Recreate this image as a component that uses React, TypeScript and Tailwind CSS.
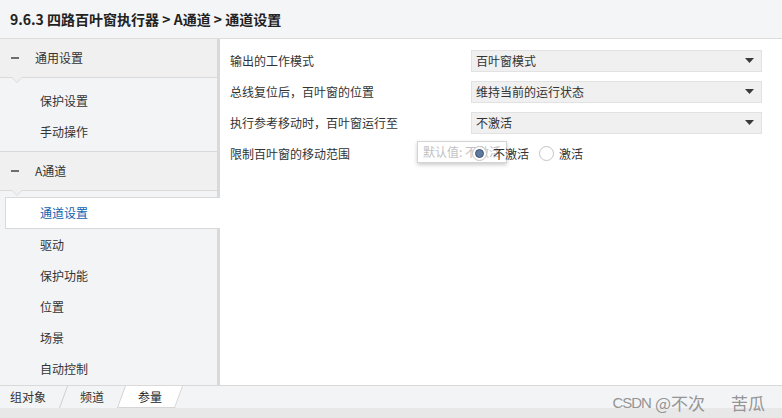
import React from "react";

const font = "font-['Microsoft_YaHei','Noto_Sans_CJK_SC',sans-serif]";

const groups = [
  { title: "通用设置", items: ["保护设置", "手动操作"] },
  { title: "A通道", items: ["通道设置", "驱动", "保护功能", "位置", "场景", "自动控制"] },
];

const selects = [
  { label: "输出的工作模式", value: "百叶窗模式" },
  { label: "总线复位后，百叶窗的位置", value: "维持当前的运行状态" },
  { label: "执行参考移动时，百叶窗运行至", value: "不激活" },
];

const Caret = () => (
  <svg width="9" height="5" viewBox="0 0 9 5">
    <path d="M0 0h9L4.5 5z" fill="#3a3a3a" />
  </svg>
);

const GroupHeader = ({ title, first }: { title: string; first?: boolean }) => (
  <div
    className={`relative flex items-center h-[39px] bg-[#f0f0f0] border-b border-[#dadada] ${
      first ? "" : "border-t h-[40px]"
    }`}
  >
    <span className="ml-[11px] w-[8px] h-[2px] bg-[#6e6e6e]" />
    <span className="ml-[16px] text-[12px] text-[#333]">{title}</span>
    <span className="absolute left-[11px] top-full w-0 h-0 border-x-[6px] border-x-transparent border-t-[6px] border-t-[#dadada]" />
    <span className="absolute left-[12px] top-full w-0 h-0 border-x-[5px] border-x-transparent border-t-[5px] border-t-[#f0f0f0]" />
  </div>
);

const Sidebar = () => (
  <aside className="w-[220px] shrink-0 bg-[#f3f4f6] border-r-[3px] border-[#d9d9d9] flex flex-col">
    <GroupHeader title={groups[0].title} first />
    <div className="pt-[7px] pb-[4px]">
      {groups[0].items.map((it) => (
        <div key={it} className="h-[31px] flex items-center pl-[40px] text-[12px] text-[#333]">
          {it}
        </div>
      ))}
    </div>
    <GroupHeader title={groups[1].title} />
    <div className="pt-[6px]">
      {groups[1].items.map((it, i) =>
        i === 0 ? (
          <div
            key={it}
            className="relative z-10 ml-[5px] mr-[-3px] h-[32px] flex items-center pl-[34px] bg-white border border-r-0 border-[#d9d9d9] text-[12px] text-[#0f62b0]"
          >
            {it}
          </div>
        ) : (
          <div key={it} className="h-[31px] flex items-center pl-[40px] text-[12px] text-[#333]">
            {it}
          </div>
        )
      )}
    </div>
  </aside>
);

const Radio = ({ checked }: { checked?: boolean }) => (
  <span className="w-[15px] h-[15px] rounded-full border border-[#c4c4c4] bg-white flex items-center justify-center">
    {checked && <span className="w-[9px] h-[9px] rounded-full bg-[#5e7a9c] border border-[#3f5573]" />}
  </span>
);

const Content = () => (
  <main className="flex-1 bg-white pl-[10px] pt-[6px] text-[12px] text-[#333]">
    {selects.map((s) => (
      <div key={s.label} className="h-[31px] flex items-center">
        <div className="w-[241px]">{s.label}</div>
        <div className="w-[291px] h-[22px] bg-[#f0f0f0] border border-[#e2e2e2] flex items-center justify-between pl-[4px] pr-[7px]">
          <span>{s.value}</span>
          <Caret />
        </div>
      </div>
    ))}
    <div className="relative h-[31px] flex items-center">
      <div className="w-[242px]">限制百叶窗的移动范围</div>
      <div className="absolute left-[187px] top-[3px] w-[90px] h-[22px] bg-white border border-[#d4d4d4] shadow-[0_2px_4px_rgba(0,0,0,0.2)] overflow-hidden whitespace-nowrap pl-[5px] flex items-center text-[#c2c2c2]">
        默认值: 不激活
      </div>
      <div className="relative z-10 flex items-center">
        <Radio checked />
        <span className="ml-[6px]">不激活</span>
        <span className="ml-[10px]">
          <Radio />
        </span>
        <span className="ml-[5px]">激活</span>
      </div>
    </div>
  </main>
);

const Tabs = () => (
  <div className="relative h-[33px] shrink-0 flex flex-col">
    <div className="h-[23px] bg-[#f3f4f6] border-t border-[#d9d9d9] flex overflow-hidden">
      <div className="ml-[-6px] w-[70px] -skew-x-[20deg] border-r border-[#cfcfcf] flex items-center justify-center">
        <span className="skew-x-[20deg] text-[12px] text-[#333]">组对象</span>
      </div>
      <div className="w-[58px] -skew-x-[20deg] border-r border-[#cfcfcf] flex items-center justify-center">
        <span className="skew-x-[20deg] text-[12px] text-[#333]">频道</span>
      </div>
      <div className="w-[57px] -skew-x-[20deg] bg-white border-r border-b border-[#d6d6d6] flex items-center justify-center">
        <span className="skew-x-[20deg] text-[12px] text-[#222]">参量</span>
      </div>
    </div>
    <div className="flex-1 bg-[#e8e8e8]" />
    <div className="absolute right-[17px] bottom-[7px] flex items-end text-[17px] leading-[17px] text-[#959595] whitespace-nowrap">
      <span className="tracking-[-1px] text-[15px] font-['Liberation_Sans',sans-serif]">CSDN</span>
      <span className="ml-[4px]">@不次</span>
      <span className="ml-[26px]">苦瓜</span>
    </div>
  </div>
);

export default function App() {
  return (
    <div className={`w-[782px] h-[418px] flex flex-col overflow-hidden bg-white ${font}`}>
      <header className="h-[39px] shrink-0 bg-[#f4f5f7] border-b border-[#dcdcdc] flex items-center pl-[10px] text-[14px] font-bold text-[#222]">
        9.6.3 四路百叶窗执行器 &gt; A通道 &gt; 通道设置
      </header>
      <div className="flex flex-1 min-h-0">
        <Sidebar />
        <Content />
      </div>
      <Tabs />
    </div>
  );
}
